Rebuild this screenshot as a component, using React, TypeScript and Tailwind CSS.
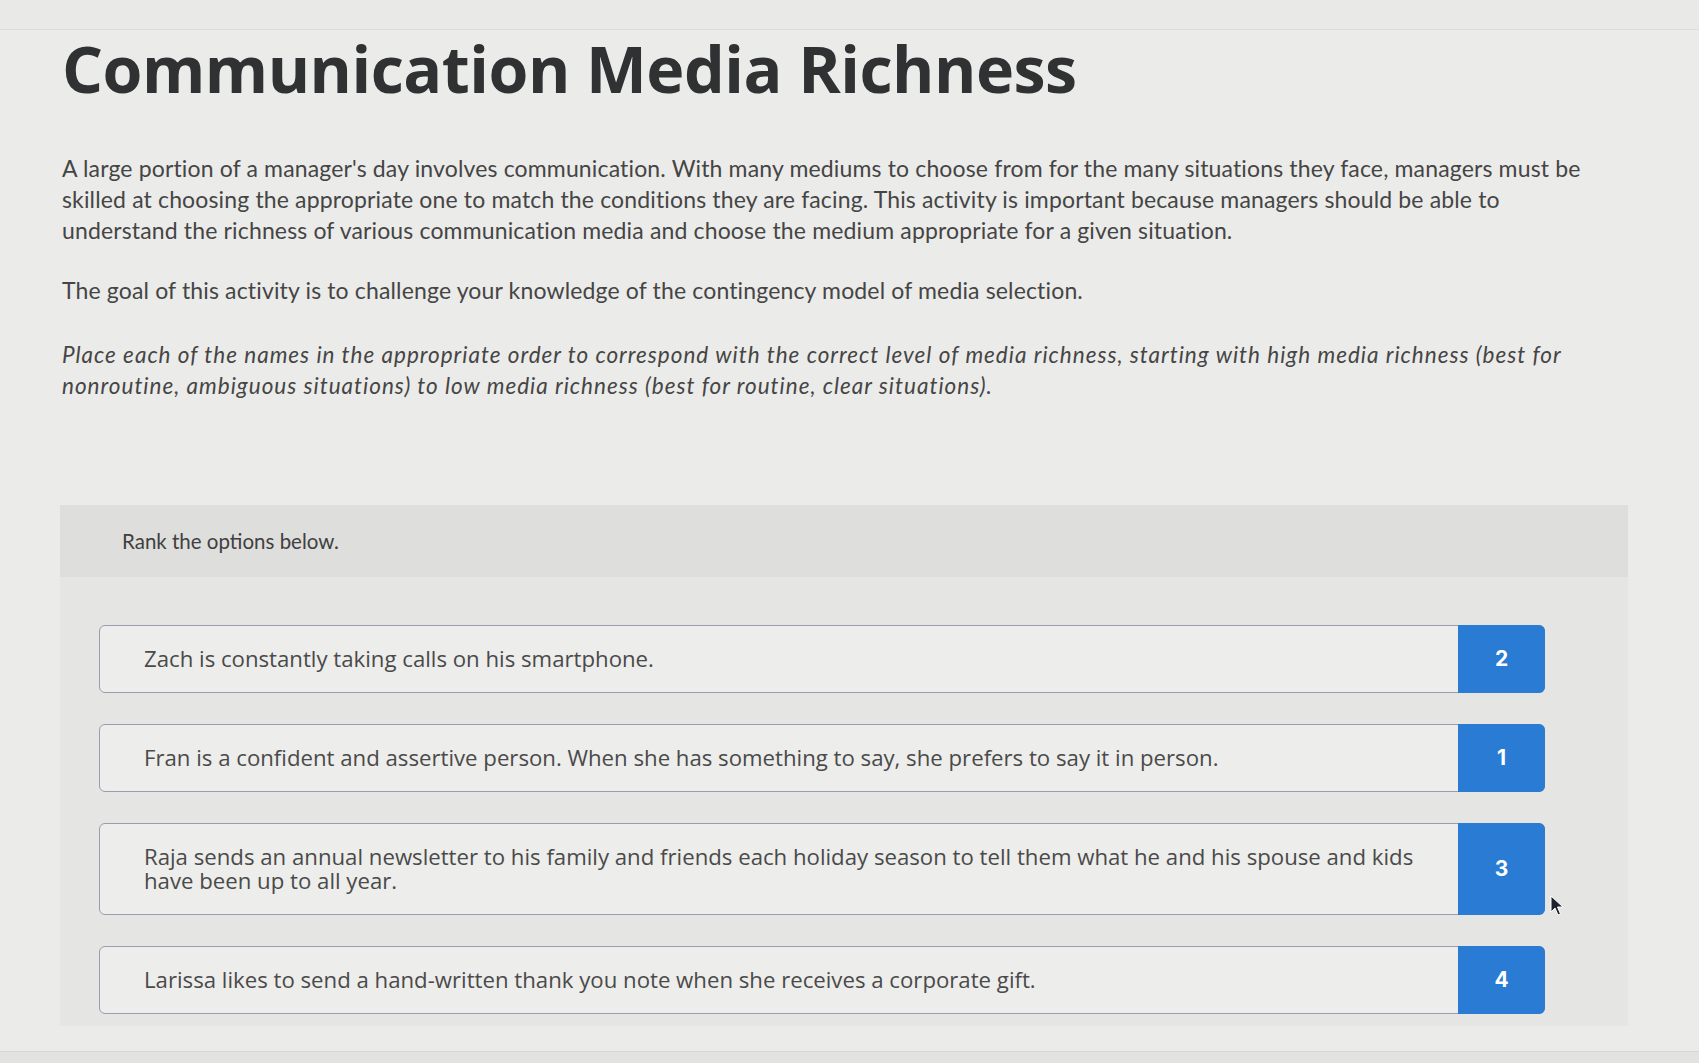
import React from 'react';

const items = [
  { text: 'Zach is constantly taking calls on his smartphone.', rank: 2 },
  { text: 'Fran is a confident and assertive person. When she has something to say, she prefers to say it in person.', rank: 1 },
  {
    text: 'Raja sends an annual newsletter to his family and friends each holiday season to tell them what he and his spouse and kids have been up to all year.',
    rank: 3,
  },
  { text: 'Larissa likes to send a hand-written thank you note when she receives a corporate gift.', rank: 4 },
];

function RankItem({ text, rank }: { text: string; rank: number }) {
  return (
    <div className="flex w-[1446px] rounded-[6px] border border-[#9a9cb0] bg-[#ededeb]">
      <div className="flex min-h-[66px] flex-1 items-center py-[21px] pl-[44px] pr-[28px] font-['Open_Sans',sans-serif] text-[22.2px] leading-[24px] text-[#4a4a4a]">
        {text}
      </div>
      <div className="-my-px -mr-px flex w-[87px] items-center justify-center rounded-r-[6px] bg-[#2a7bd3] font-['Inter',sans-serif] text-[21px] font-bold text-white">
        {rank}
      </div>
    </div>
  );
}

export default function App() {
  return (
    <div className="relative h-[1063px] w-full overflow-hidden bg-[#ebebe9] text-[#3b3b3b]">
      <div className="h-[30px] border-b border-[#dcdcda] bg-[#e9e9e7]" />

      <div className="pl-[62px]">
        <h1 className="mt-[-2px] font-['Open_Sans',sans-serif] text-[64.5px] font-bold leading-[80px] tracking-[-0.5px] text-[#2f3133]">
          Communication Media Richness
        </h1>

        <div className="mt-[45px] whitespace-nowrap font-['Lato',sans-serif] text-[23px] leading-[31px] tracking-[0.15px] text-[#454545]">
          <p>
            A large portion of a manager's day involves communication. With many mediums to choose from for the many
            situations they face, managers must be
            <br />
            skilled at choosing the appropriate one to match the conditions they are facing. This activity is important
            because managers should be able to
            <br />
            understand the richness of various communication media and choose the medium appropriate for a given
            situation.
          </p>
          <p className="mt-[29px]">
            The goal of this activity is to challenge your knowledge of the contingency model of media selection.
          </p>
          <p className="mt-[33px] text-[22.5px] italic tracking-[1px]">
            Place each of the names in the appropriate order to correspond with the correct level of media richness,
            starting with high media richness (best for
            <br />
            nonroutine, ambiguous situations) to low media richness (best for routine, clear situations).
          </p>
        </div>
      </div>

      <div className="ml-[60px] mt-[104px] w-[1568px] bg-[#e5e5e3]">
        <div className="flex h-[72px] items-center bg-[#dededc] pl-[62px] font-['Lato',sans-serif] text-[20.5px] text-[#404040]">
          Rank the options below.
        </div>
        <div className="flex flex-col gap-[31px] pb-[12px] pl-[39px] pt-[48px]">
          {items.map((it) => (
            <RankItem key={it.rank} text={it.text} rank={it.rank} />
          ))}
        </div>
      </div>

      <svg className="absolute left-[1550px] top-[895px]" width="16" height="22" viewBox="0 0 16 22">
        <path d="M1 1 L1 17 L5 13 L8 20 L10.5 19 L7.5 12 L13 12 Z" fill="#1f2330" stroke="#ffffff" strokeWidth="1" />
      </svg>

      <div className="absolute bottom-0 left-0 h-[12px] w-full border-t border-[#d6d6d4] bg-[#e2e2e0]" />
    </div>
  );
}
